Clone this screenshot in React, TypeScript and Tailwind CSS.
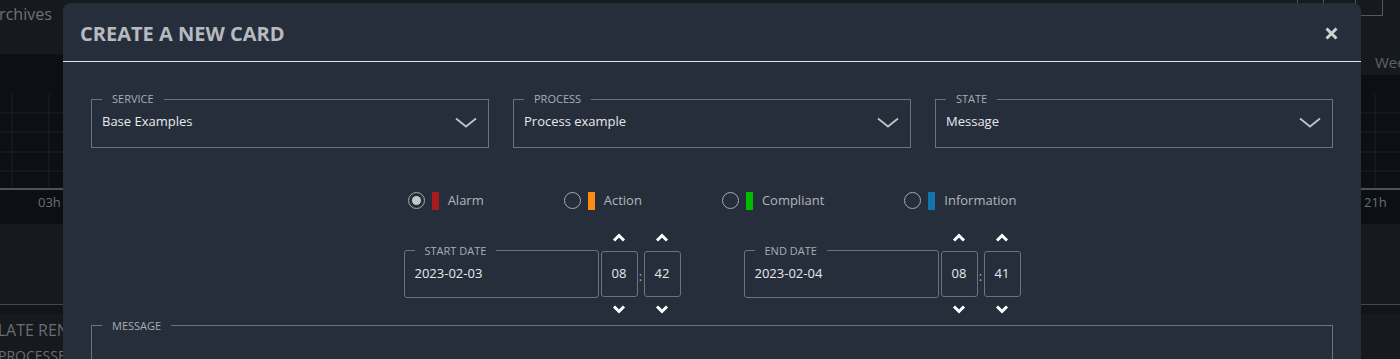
import React from 'react';

const font = { fontFamily: '"Open Sans", "Liberation Sans", sans-serif' };

function SelectChevron() {
  return (
    <svg width="22" height="11" viewBox="0 0 22 11" fill="none">
      <path d="M1 1.5 L11 9.5 L21 1.5" stroke="#bfc2c6" strokeWidth="1.8" />
    </svg>
  );
}

function TimeChevron({ up }: { up?: boolean }) {
  return (
    <svg width="14" height="9" viewBox="0 0 14 9" fill="none">
      <path d={up ? 'M2 7.5 L7 2.5 L12 7.5' : 'M2 1.5 L7 6.5 L12 1.5'} stroke="#ffffff" strokeWidth="3" />
    </svg>
  );
}

function SelectField({ label, value }: { label: string; value: string }) {
  return (
    <fieldset className="border border-[#6e7279] pl-[10px] pr-[11px] pb-[10px]">
      <legend className="px-[10px] text-[11px] leading-[16px] text-[#a9adb3]">{label}</legend>
      <div className="h-[30px] flex items-center justify-between">
        <span className="text-[13px] text-[#e8e9eb]">{value}</span>
        <SelectChevron />
      </div>
    </fieldset>
  );
}

function Severity({ label, color, checked }: { label: string; color: string; checked?: boolean }) {
  return (
    <label className="flex items-center">
      <span className="w-[17px] h-[17px] rounded-full border-[1.5px] border-[#a7aaaf] flex items-center justify-center">
        {checked && <span className="w-[9px] h-[9px] rounded-full bg-[#c4c6c9]" />}
      </span>
      <span className={`ml-[7px] w-[7px] h-[18px] ${color}`} />
      <span className="ml-[9px] text-[13px] text-[#b3b6bb]">{label}</span>
    </label>
  );
}

function TimeBox({ value }: { value: string }) {
  return (
    <div className="flex flex-col items-center">
      <button className="h-[14px] flex items-center justify-center w-[37px]">
        <TimeChevron up />
      </button>
      <div className="mt-[6px] w-[37px] h-[46px] rounded-[3px] border border-[#6e7279] flex items-center justify-center text-[13px] text-[#e8e9eb]">
        {value}
      </div>
      <button className="mt-[6px] h-[14px] flex items-center justify-center w-[37px]">
        <TimeChevron />
      </button>
    </div>
  );
}

function DateTime({ label, date, hour, minute }: { label: string; date: string; hour: string; minute: string }) {
  return (
    <div className="flex items-start">
      <fieldset className="mt-[12px] w-[195px] rounded-[3px] border border-[#6e7279] pl-[10px] pb-[10px]">
        <legend className="px-[10px] text-[11px] leading-[16px] text-[#a9adb3]">{label}</legend>
        <div className="h-[28px] pt-[2px] flex items-center text-[13px] text-[#e8e9eb]">{date}</div>
      </fieldset>
      <div className="ml-[2px]">
        <TimeBox value={hour} />
      </div>
      <span className="w-[6px] mt-[35px] text-center text-[13px] leading-[20px] text-[#a9adb3]">:</span>
      <TimeBox value={minute} />
    </div>
  );
}

function ChartGrid({ right }: { right?: boolean }) {
  return (
    <svg width="100%" height="94" className="block">
      {[19, 38, 58, 77].map((y) => (
        <line key={y} x1="0" x2="100%" y1={y} y2={y} stroke="#1d2026" strokeWidth="1" />
      ))}
      {(right ? [14] : [12, 49]).map((x) => (
        <line key={x} x1={x} x2={x} y1="0" y2="94" stroke="#1d2026" strokeWidth="1" />
      ))}
    </svg>
  );
}

export default function App() {
  return (
    <div className="relative w-[1400px] h-[359px] overflow-hidden bg-[#16191e]" style={font}>
      {/* page behind the modal */}
      <div className="h-[54px] flex justify-between">
        <span className="ml-[-11px] mt-[2px] text-[16px] leading-[24px] text-[#6f7278]">Archives</span>
        <div className="flex items-start mr-[17px]">
          <div className="w-[27px] h-[16px] border border-t-0 border-[#55585e]" />
          <div className="ml-[31px] w-[28px] h-[16px] border border-t-0 border-[#55585e]" />
        </div>
      </div>
      <div className="flex">
        <div className="flex-1">
          <div className="h-[40px] bg-[#0c0f14]" />
          <div className="bg-[#0c0f14]">
            <ChartGrid />
          </div>
          <div className="h-[2px] bg-[#4d5056]" />
          <div className="h-[34px] bg-[#0c0f14] pl-[38px] text-[13px] leading-[24px] text-[#6b6e74]">03h</div>
        </div>
        <div className="w-[39px]">
          <div className="h-[21px] pl-[14px] text-[15px] leading-[16px] text-[#5f6268]">Week</div>
          <div className="h-[19px] bg-[#0c0f14]" />
          <div className="bg-[#0c0f14]">
            <ChartGrid right />
          </div>
          <div className="h-[2px] bg-[#4d5056]" />
          <div className="h-[34px] bg-[#0c0f14] pl-[3px] text-[13px] leading-[24px] text-[#6b6e74]">21h</div>
        </div>
      </div>
      <div className="h-[80px]" />
      <div className="h-px bg-[#45484e]" />
      <div className="h-[9px] bg-[#121519]" />
      <div className="ml-[-44px] text-[16px] leading-[32px] text-[#6a6d73]">TEMPLATE RENDERING</div>
      <div className="ml-[-2px] text-[14px] leading-[20px] text-[#6a6d73]">PROCESSES</div>

      {/* modal */}
      <div className="absolute left-[63px] top-[3px] w-[1298px] h-[420px] rounded-[8px] bg-[#262e3c]">
        <div className="h-[59px] pt-[3px] px-[17px] flex items-center justify-between border-b border-[#e6e7e9]">
          <h1 className="text-[20px] font-bold text-[#b7bac0]">CREATE A NEW CARD</h1>
          <button className="mr-[6px] flex items-center">
            <svg width="13" height="13" viewBox="0 0 13 13" fill="none">
              <path d="M1.5 1.5 L11.5 11.5 M11.5 1.5 L1.5 11.5" stroke="#d0d1d3" strokeWidth="3" />
            </svg>
          </button>
        </div>

        <div className="px-[28px] pt-[29px]">
          <div className="grid grid-cols-3 gap-[24px]">
            <SelectField label="SERVICE" value="Base Examples" />
            <SelectField label="PROCESS" value="Process example" />
            <SelectField label="STATE" value="Message" />
          </div>

          <div className="mt-[43px] flex justify-center gap-[80px]">
            <Severity label="Alarm" color="bg-[#a61c1c]" checked />
            <Severity label="Action" color="bg-[#fb8d12]" />
            <Severity label="Compliant" color="bg-[#00bb00]" />
            <Severity label="Information" color="bg-[#1174ad]" />
          </div>

          <div className="mt-[20px] flex justify-center gap-[63px]">
            <DateTime label="START DATE" date="2023-02-03" hour="08" minute="42" />
            <DateTime label="END DATE" date="2023-02-04" hour="08" minute="41" />
          </div>

          <fieldset className="mt-[1px] h-[80px] border border-[#6e7279] pl-[10px]">
            <legend className="px-[10px] text-[11px] leading-[16px] text-[#a9adb3]">MESSAGE</legend>
          </fieldset>
        </div>
      </div>
    </div>
  );
}
